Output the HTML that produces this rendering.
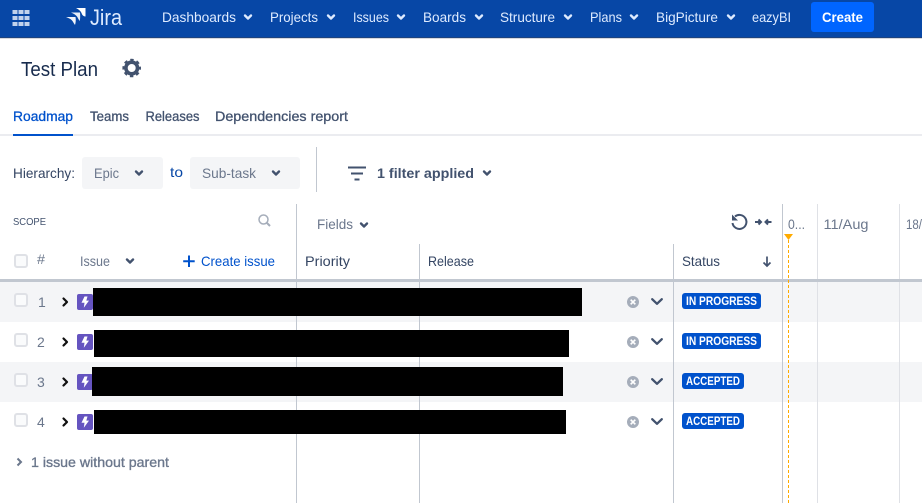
<!DOCTYPE html>
<html lang="en"><head><meta charset="utf-8"><title>Test Plan</title>
<style>
html,body{margin:0;padding:0;background:#fff;width:922px;height:503px;overflow:hidden}
svg{display:block;font-family:"Liberation Sans",sans-serif}
.n{font-size:14px;fill:#deebff}
.h{font-size:14px;fill:#172b4d}
.g{font-size:14px;fill:#6b778c}
.t{font-size:14px;fill:#42526e;stroke:#42526e;stroke-width:.3}
.l{font-size:12px;font-weight:bold;fill:#fff}
</style></head><body>
<svg width="922" height="503" viewBox="0 0 922 503" xmlns="http://www.w3.org/2000/svg">
<defs>
<path id="chev" d="M-3-1.500 0 1.500 3-1.500" fill="none" stroke-width="2.400" stroke-linecap="round" stroke-linejoin="round"/>
<path id="big" d="M-4.800-2.300 0 2.300 4.800-2.300" fill="none" stroke-width="2.300" stroke-linecap="round" stroke-linejoin="round"/>
<g id="epic"><rect width="16" height="16" rx="2" fill="#6554c0"/><path d="M7.500 2.500 4.500 8.800H7.500L6.800 13.800 12 6.600H9.300L10.500 2.500z" fill="#fff"/></g>
<g id="clr"><circle r="6" fill="#a5adba"/><path d="M-2.300-2.300 2.300 2.300M2.300-2.300-2.300 2.300" stroke="#fff" stroke-width="1.700"/></g>
</defs>

<!-- nav -->
<rect width="922" height="37.500" fill="#0747a6"/>
<rect y="37.500" width="922" height=".7" fill="#333f58"/>
<g fill="#c1d2ec">
<rect x="12.500" y="10" width="5" height="4"/><rect x="18.500" y="10" width="5" height="4"/><rect x="24.500" y="10" width="5" height="4"/>
<rect x="12.500" y="16" width="5" height="4"/><rect x="18.500" y="16" width="5" height="4"/><rect x="24.500" y="16" width="5" height="4"/>
<rect x="12.500" y="22" width="5" height="4"/><rect x="18.500" y="22" width="5" height="4"/><rect x="24.500" y="22" width="5" height="4"/>
</g>
<g fill="#fff">
<path d="M76 8h9.500v8.500c-2-.2-3.200-1.200-3.800-3-.6-2-2.500-3.800-5.700-5.500z"/>
<path d="M71 12.500h9c.3 3.500.3 6-.3 8.500-1.200-1.500-1.700-3-2.700-4.500-1.200-1.700-3.500-2.800-6-4z" opacity=".9"/>
<path d="M66 17h9.500c.5 3 .3 5.500-.5 8-1.200-1.800-2-3.500-3.200-4.800C70.500 18.800 68.500 18 66 17z" opacity=".95"/>
</g>
<text x="90" y="25" font-size="22" fill="#deebff" textLength="32" lengthAdjust="spacingAndGlyphs">Jira</text>
<text class="n" x="162" y="22" textLength="74" lengthAdjust="spacingAndGlyphs">Dashboards</text>
<text class="n" x="270" y="22" textLength="48" lengthAdjust="spacingAndGlyphs">Projects</text>
<text class="n" x="353" y="22" textLength="36" lengthAdjust="spacingAndGlyphs">Issues</text>
<text class="n" x="423" y="22" textLength="43" lengthAdjust="spacingAndGlyphs">Boards</text>
<text class="n" x="500" y="22" textLength="55" lengthAdjust="spacingAndGlyphs">Structure</text>
<text class="n" x="590" y="22" textLength="32" lengthAdjust="spacingAndGlyphs">Plans</text>
<text class="n" x="656" y="22" textLength="62" lengthAdjust="spacingAndGlyphs">BigPicture</text>
<text class="n" x="752" y="22" textLength="39" lengthAdjust="spacingAndGlyphs">eazyBI</text>
<g stroke="#deebff">
<use href="#chev" x="248" y="17"/><use href="#chev" x="331" y="17"/><use href="#chev" x="401" y="17"/><use href="#chev" x="479" y="17"/>
<use href="#chev" x="568" y="17"/><use href="#chev" x="634" y="17"/><use href="#chev" x="731" y="17"/>
</g>
<rect x="811" y="2" width="63" height="30" rx="3" fill="#0065ff"/>
<text x="822" y="22" font-size="14" font-weight="bold" fill="#fff" textLength="41" lengthAdjust="spacingAndGlyphs">Create</text>

<!-- title -->
<text x="21" y="76" font-size="20" fill="#172b4d" textLength="77" lengthAdjust="spacingAndGlyphs">Test Plan</text>
<g transform="translate(131.700 68)" fill="none" stroke="#42526e">
<circle r="5.800" stroke-width="3.600"/>
<circle r="8.200" stroke-width="2.200" stroke-dasharray="3.400 3.040" stroke-dashoffset="1.700"/>
</g>

<!-- tabs -->
<text class="t" x="13" y="121" style="fill:#0052cc;stroke:#0052cc" textLength="60" lengthAdjust="spacingAndGlyphs">Roadmap</text>
<text class="t" x="90" y="121" textLength="39" lengthAdjust="spacingAndGlyphs">Teams</text>
<text class="t" x="145.500" y="121" textLength="54" lengthAdjust="spacingAndGlyphs">Releases</text>
<text class="t" x="215" y="121" textLength="133" lengthAdjust="spacingAndGlyphs">Dependencies report</text>
<rect y="134" width="922" height="2" fill="#ebecf0"/>
<rect x="13" y="134" width="60" height="2" fill="#0052cc"/>

<!-- hierarchy -->
<text class="h" x="13" y="178" style="fill:#344563" textLength="62" lengthAdjust="spacingAndGlyphs">Hierarchy:</text>
<rect x="82" y="157" width="81" height="32" rx="3" fill="#f4f5f7"/>
<text class="g" x="94" y="178" textLength="25" lengthAdjust="spacingAndGlyphs">Epic</text>
<use href="#chev" x="139" y="173" stroke="#42526e"/>
<text class="h" x="170" y="177" style="fill:#0747a6" textLength="13" lengthAdjust="spacingAndGlyphs">to</text>
<rect x="190" y="157" width="110" height="32" rx="3" fill="#f4f5f7"/>
<text class="g" x="202" y="178" textLength="54" lengthAdjust="spacingAndGlyphs">Sub-task</text>
<use href="#chev" x="276" y="173" stroke="#42526e"/>
<rect x="316" y="147" width="1" height="45" fill="#c1c7d0"/>
<path d="M348 167.500h18M351 173.500h12M354.500 179.500h5" stroke="#42526e" stroke-width="2" fill="none"/>
<text x="377" y="178" font-size="14" font-weight="bold" fill="#42526e" textLength="97" lengthAdjust="spacingAndGlyphs">1 filter applied</text>
<use href="#chev" x="487" y="173" stroke="#42526e"/>

<!-- row backgrounds -->
<rect y="282" width="922" height="40" fill="#f4f5f7"/>
<rect y="362" width="922" height="40" fill="#f4f5f7"/>

<!-- grid lines -->
<g fill="#c1c7d0">
<rect x="296" y="204" width="1" height="299"/>
<rect x="419" y="244" width="1" height="259"/>
<rect x="673" y="244" width="1" height="259"/>
<rect x="782" y="204" width="1" height="299"/>
</g>
<rect x="817" y="204" width="1" height="299" fill="#dfe1e6"/>
<rect x="899" y="204" width="1" height="299" fill="#dfe1e6"/>
<rect y="279" width="922" height="3" fill="#c1c7d0"/>

<!-- header -->
<text x="13" y="225" font-size="10.500" fill="#42526e" textLength="33" lengthAdjust="spacingAndGlyphs">SCOPE</text>
<g fill="none" stroke="#a5adba" stroke-width="1.500"><circle cx="263.500" cy="219.500" r="4.500"/><path d="M267 223 270 226" stroke-width="2"/></g>
<text class="g" x="317" y="229" textLength="36" lengthAdjust="spacingAndGlyphs">Fields</text>
<use href="#chev" x="364" y="225" stroke="#42526e"/>
<path d="M735 216.500a7 7 0 1 1-2.500 6.500" fill="none" stroke="#42526e" stroke-width="2"/>
<path d="M732 214.500v6h6z" fill="#42526e"/>
<g fill="none" stroke="#42526e" stroke-width="2"><path d="M755 222h6M758.500 219.500 761 222l-2.500 2.500M771.500 222h-6M768 219.500 765.500 222l2.500 2.500"/></g>
<text class="g" x="788" y="229" textLength="17" lengthAdjust="spacingAndGlyphs">0...</text>
<text class="g" x="823.500" y="229" textLength="45" lengthAdjust="spacingAndGlyphs">11/Aug</text>
<text class="g" x="906" y="229" textLength="16" lengthAdjust="spacingAndGlyphs">18/</text>
<path d="M784 234h9l-4.500 6z" fill="#ffab00"/>
<path d="M788.500 240V503" stroke="#ffab00" stroke-width="1" stroke-dasharray="3 2" fill="none"/>

<rect x="15" y="255" width="12" height="12" rx="2" fill="#fafbfc" stroke="#dfe1e6" stroke-width="2"/>
<text class="g" x="37" y="264" textLength="8" lengthAdjust="spacingAndGlyphs">#</text>
<text class="g" x="80" y="266" textLength="30" lengthAdjust="spacingAndGlyphs">Issue</text>
<use href="#chev" x="130" y="261" stroke="#42526e"/>
<path d="M189 255.500v11.500M183.200 261.300h11.500" stroke="#0052cc" stroke-width="2" fill="none"/>
<text class="h" x="201" y="266" style="fill:#0052cc" textLength="74" lengthAdjust="spacingAndGlyphs">Create issue</text>
<text class="h" x="305" y="266" style="fill:#344563" textLength="45" lengthAdjust="spacingAndGlyphs">Priority</text>
<text class="h" x="428" y="266" style="fill:#344563" textLength="46" lengthAdjust="spacingAndGlyphs">Release</text>
<text class="h" x="682" y="266" style="fill:#344563" textLength="38" lengthAdjust="spacingAndGlyphs">Status</text>
<path d="M767 256.500v9M763.500 262.500l3.500 3.500 3.500-3.500" fill="none" stroke="#42526e" stroke-width="1.700"/>

<!-- checkboxes -->
<g fill="#fafbfc" stroke="#dfe1e6" stroke-width="2">
<rect x="15" y="294" width="12" height="12" rx="2"/>
<rect x="15" y="334" width="12" height="12" rx="2"/>
<rect x="15" y="374" width="12" height="12" rx="2"/>
<rect x="15" y="414" width="12" height="12" rx="2"/>
</g>
<text class="g" x="38" y="307">1</text>
<text class="g" x="37" y="347">2</text>
<text class="g" x="37" y="387">3</text>
<text class="g" x="37" y="427">4</text>

<!-- expanders -->
<g fill="none" stroke="#111" stroke-width="2.200" stroke-linecap="round" stroke-linejoin="round">
<path d="M63.500 298.500 67 302l-3.500 3.500"/>
<path d="M63.500 338.500 67 342l-3.500 3.500"/>
<path d="M63.500 378.500 67 382l-3.500 3.500"/>
<path d="M63.500 418.500 67 422l-3.500 3.500"/>
</g>
<use href="#epic" x="77" y="294"/><use href="#epic" x="77" y="334"/><use href="#epic" x="77" y="374"/><use href="#epic" x="77" y="414"/>

<!-- redactions -->
<rect x="93" y="288" width="489" height="28" fill="#000"/>
<rect x="94" y="330" width="475" height="27" fill="#000"/>
<rect x="92" y="367" width="471" height="29" fill="#000"/>
<rect x="94" y="410" width="472" height="24" fill="#000"/>

<!-- row actions -->
<use href="#clr" x="633" y="302"/><use href="#clr" x="633" y="342"/><use href="#clr" x="633" y="382"/><use href="#clr" x="633" y="422"/>
<g stroke="#42526e">
<use href="#big" x="657" y="301.500"/><use href="#big" x="657" y="341.500"/><use href="#big" x="657" y="381.500"/><use href="#big" x="657" y="421.500"/>
</g>

<!-- lozenges -->
<g fill="#0052cc">
<rect x="682" y="293" width="79" height="16" rx="3"/>
<rect x="682" y="333" width="79" height="16" rx="3"/>
<rect x="682" y="373" width="62" height="16" rx="3"/>
<rect x="682" y="413" width="62" height="16" rx="3"/>
</g>
<text class="l" x="686" y="305" textLength="71" lengthAdjust="spacingAndGlyphs">IN PROGRESS</text>
<text class="l" x="686" y="345" textLength="71" lengthAdjust="spacingAndGlyphs">IN PROGRESS</text>
<text class="l" x="686" y="385" textLength="54" lengthAdjust="spacingAndGlyphs">ACCEPTED</text>
<text class="l" x="686" y="425" textLength="54" lengthAdjust="spacingAndGlyphs">ACCEPTED</text>

<!-- footer -->
<path d="M17.500 458.500 21 462l-3.500 3.500" fill="none" stroke="#6b778c" stroke-width="2"/>
<text x="31" y="467" font-size="14" fill="#6b778c" stroke="#6b778c" stroke-width=".35" textLength="138" lengthAdjust="spacingAndGlyphs">1 issue without parent</text>
</svg>
</body></html>
